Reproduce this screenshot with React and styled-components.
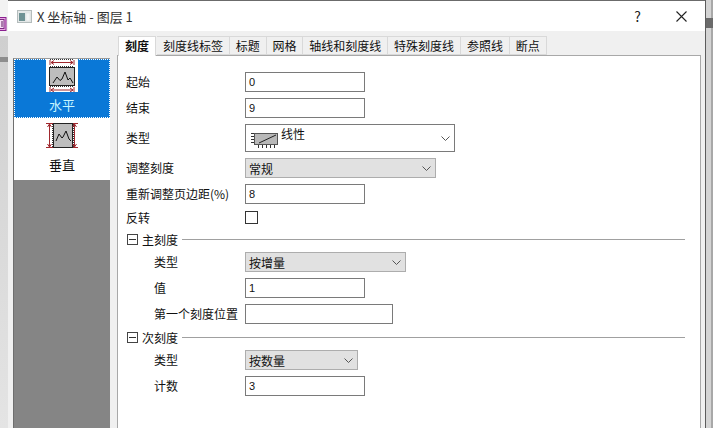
import React from "react";
import styled, { createGlobalStyle } from "styled-components";

const GlobalStyle = createGlobalStyle`
    html, body {
        margin: 0;
        padding: 0;
        background: #8a8a8a;
    }
    * {
        box-sizing: border-box;
    }
`;

const FONT = `"Noto Sans CJK SC", "Liberation Sans", sans-serif`;

const tabs = ["刻度", "刻度线标签", "标题", "网格", "轴线和刻度线", "特殊刻度线", "参照线", "断点"];

const App = () => {
    return (
        <>
            <GlobalStyle />
            <Desktop>
                <LeftEdge>
                    <AppIcon />
                    <EdgeBand />
                </LeftEdge>
                <Window>
                    <TitleBar>
                        <WindowIcon />
                        <TitleText>X 坐标轴 - 图层 1</TitleText>
                        <HelpMark>?</HelpMark>
                        <CloseIcon />
                    </TitleBar>
                    <Body>
                        <SideList>
                            <SideItem $selected>
                                <HorizontalIcon />
                                <SideLabel $selected>水平</SideLabel>
                            </SideItem>
                            <SideItem>
                                <VerticalIcon />
                                <SideLabel>垂直</SideLabel>
                            </SideItem>
                        </SideList>
                        <Main>
                            <TabStrip>
                                {tabs.map((t, i) => (
                                    <Tab key={t} $active={i === 0}>
                                        {t}
                                    </Tab>
                                ))}
                            </TabStrip>
                            <Panel>
                                <Row>
                                    <Label>起始</Label>
                                    <TextBox $w={120}>0</TextBox>
                                </Row>
                                <Row>
                                    <Label>结束</Label>
                                    <TextBox $w={120}>9</TextBox>
                                </Row>
                                <Row>
                                    <Label>类型</Label>
                                    <ComboBox>
                                        <LinearIcon />
                                        <ComboText>线性</ComboText>
                                        <Chevron />
                                    </ComboBox>
                                </Row>
                                <Row>
                                    <Label>调整刻度</Label>
                                    <SelectBox $w={191}>
                                        常规
                                        <Chevron />
                                    </SelectBox>
                                </Row>
                                <Row>
                                    <Label>重新调整页边距(%)</Label>
                                    <TextBox $w={120}>8</TextBox>
                                </Row>
                                <Row>
                                    <Label>反转</Label>
                                    <CheckBox />
                                </Row>
                                <GroupRow>
                                    <MinusBox />
                                    <GroupTitle>主刻度</GroupTitle>
                                    <GroupLine />
                                </GroupRow>
                                <Row>
                                    <Label $indent>类型</Label>
                                    <SelectBox $w={161}>
                                        按增量
                                        <Chevron />
                                    </SelectBox>
                                </Row>
                                <Row>
                                    <Label $indent>值</Label>
                                    <TextBox $w={120}>1</TextBox>
                                </Row>
                                <Row>
                                    <Label $indent>第一个刻度位置</Label>
                                    <TextBox $w={148} />
                                </Row>
                                <GroupRow>
                                    <MinusBox />
                                    <GroupTitle>次刻度</GroupTitle>
                                    <GroupLine />
                                </GroupRow>
                                <Row>
                                    <Label $indent>类型</Label>
                                    <SelectBox $w={113}>
                                        按数量
                                        <Chevron />
                                    </SelectBox>
                                </Row>
                                <Row>
                                    <Label $indent>计数</Label>
                                    <TextBox $w={120}>3</TextBox>
                                </Row>
                            </Panel>
                        </Main>
                    </Body>
                </Window>
                <RightEdge>
                    <RightNotch />
                </RightEdge>
            </Desktop>
        </>
    );
};

export default App;

const AppIcon = () => (
    <AppIconSvg width="8" height="14" viewBox="0 0 8 14">
        <rect x="-4" y="0.5" width="10" height="13" fill="#e9a8e4" stroke="#8a1f8f" />
        <rect x="-2" y="2.5" width="6" height="9" fill="#f6dff5" stroke="#7a2a80" />
        <path d="M1 5h2M1 7h2M1 9h2" stroke="#5c1a60" />
    </AppIconSvg>
);

const WindowIcon = () => (
    <svg width="15" height="13" viewBox="0 0 15 13">
        <rect x="0.5" y="0.5" width="14" height="12" fill="#e4e8e8" stroke="#b4bcbc" />
        <rect x="2" y="3" width="6" height="8" fill="#6f9294" />
        <rect x="9" y="3" width="4" height="8" fill="#f2f4f4" stroke="#d5dada" strokeWidth="0.5" />
    </svg>
);

const CloseIcon = () => (
    <CloseSvg width="11" height="11" viewBox="0 0 11 11">
        <path d="M0.5 0.5L10.5 10.5M10.5 0.5L0.5 10.5" stroke="#222" strokeWidth="1.1" fill="none" />
    </CloseSvg>
);

const HorizontalIcon = () => (
    <IconFrame width="32" height="33" viewBox="0 0 32 33">
        <rect width="32" height="33" fill="#fff" />
        <path d="M4 0.5h24" stroke="#333" strokeDasharray="1 1" />
        <path d="M5 3.5H27M5 3.5l3-2M5 3.5l3 2M27 3.5l-3-2M27 3.5l-3 2" stroke="#a0282e" fill="none" />
        <path d="M4 1v5M28 1v5" stroke="#a0282e" />
        <path d="M4 7.5h24" stroke="#333" strokeDasharray="1 1" />
        <rect x="3.5" y="8.5" width="25" height="18" fill="#bdbdbd" stroke="#222" />
        <path d="M7 24l4-6 3 3.5 2-1.5 3-7 3 8 2-2 3 5" stroke="#111" fill="none" />
        <path d="M4 27.5h24" stroke="#333" strokeDasharray="1 1" />
        <path d="M5 31H27M5 31l3-2M5 31l3 2M27 31l-3-2M27 31l-3 2" stroke="#a0282e" fill="none" />
        <path d="M4 28v5M28 28v5" stroke="#a0282e" />
    </IconFrame>
);

const VerticalIcon = () => (
    <IconFrame width="32" height="27" viewBox="0 0 32 27">
        <path d="M3.5 2V25M3.5 2l-2 3M3.5 2l2 3M3.5 25l-2-3M3.5 25l2-3" stroke="#a0282e" fill="none" />
        <path d="M0 1.5h7M0 25.5h7M25 1.5h7M25 25.5h7" stroke="#a0282e" />
        <path d="M6.5 2v23M27.5 2v23" stroke="#333" strokeDasharray="1 1" />
        <rect x="7.5" y="1.5" width="19" height="24" fill="#bdbdbd" stroke="#222" />
        <path d="M10 19l3-7 3 4 1-1 3-6 3 8 2 2" stroke="#111" fill="none" />
        <path d="M28.5 2V25M28.5 2l-2 3M28.5 2l2 3M28.5 25l-2-3M28.5 25l2-3" stroke="#a0282e" fill="none" />
    </IconFrame>
);

const LinearIcon = () => (
    <svg width="27" height="17" viewBox="0 0 27 17">
        <path d="M0 2.5h6M0 5.5h6M0 8.5h6M0 11.5h6" stroke="#333" />
        <path d="M7.5 14v3M11.5 14v3M15.5 14v3M19.5 14v3M23.5 14v3" stroke="#333" />
        <rect x="3.5" y="2.5" width="23" height="11" fill="#b9b9b9" stroke="#555" />
        <path d="M8 12L25 4" stroke="#222" fill="none" />
    </svg>
);

const Chevron = () => (
    <ChevronSvg width="9" height="5" viewBox="0 0 9 5">
        <path d="M0.5 0.5L4.5 4.5L8.5 0.5" stroke="#555" fill="none" />
    </ChevronSvg>
);

const MinusBox = () => (
    <svg width="11" height="11" viewBox="0 0 11 11">
        <rect x="0.5" y="0.5" width="10" height="10" fill="#fff" stroke="#444" />
        <path d="M2 5.5h7" stroke="#333" />
    </svg>
);

const Desktop = styled.div`
    display: flex;
    width: 713px;
    height: 428px;
    overflow: hidden;
    font-family: ${FONT};
    font-size: 12px;
    color: #111;
    background: #a8a8a8;
`;

const LeftEdge = styled.div`
    width: 8px;
    flex-shrink: 0;
    display: flex;
    flex-direction: column;
    padding-top: 17px;
    background: linear-gradient(to bottom, #f2f2f2 0, #f2f2f2 36px, #cfcfcf 36px, #e4e4e4 100%);
`;

const AppIconSvg = styled.svg`
    display: block;
    flex-shrink: 0;
`;

const EdgeBand = styled.div`
    height: 5px;
    margin-top: 26px;
    background: #8d8d8d;
`;

const RightEdge = styled.div`
    width: 8px;
    flex-shrink: 0;
    padding-top: 18px;
    background: linear-gradient(to right, #d4d4d4 0, #d4d4d4 5px, #a8a8a8 5px);
    border-left: 1px solid #5c5c5c;
`;

const RightNotch = styled.div`
    width: 7px;
    height: 10px;
    background: #6a6a6a;
`;

const Window = styled.div`
    width: 697px;
    flex-shrink: 0;
    display: flex;
    flex-direction: column;
    background: #f0f0f0;
`;

const TitleBar = styled.div`
    height: 31px;
    flex-shrink: 0;
    display: flex;
    align-items: center;
    padding: 0 18px 0 9px;
    background: #fff;
    border-top: 1px solid #6b6b6b;
`;

const TitleText = styled.div`
    margin-left: 5px;
    flex: 1;
    font-size: 13px;
    color: #333;
`;

const HelpMark = styled.div`
    margin-right: 35px;
    font-size: 14px;
    color: #222;
`;

const CloseSvg = styled.svg`
    display: block;
`;

const Body = styled.div`
    flex: 1;
    min-height: 0;
    display: flex;
    padding: 0 4px 0 5px;
`;

const SideList = styled.div`
    width: 97px;
    flex-shrink: 0;
    margin-top: 27px;
    margin-right: 7px;
    background: #858585;
    border-left: 1px solid #6e6e6e;
    border-top: 1px solid #9a9a9a;
`;

const SideItem = styled.div`
    height: ${(p) => (p.$selected ? "59px" : "62px")};
    display: flex;
    flex-direction: column;
    align-items: center;
    gap: ${(p) => (p.$selected ? "4px" : "7px")};
    padding-top: ${(p) => (p.$selected ? "0" : "4px")};
    background: ${(p) => (p.$selected ? "#0a78d7" : "#fff")};
    outline: ${(p) => (p.$selected ? "1px dotted #fff" : "none")};
    outline-offset: -1px;
`;

const IconFrame = styled.svg`
    display: block;
    flex-shrink: 0;
`;

const SideLabel = styled.div`
    font-size: 13px;
    line-height: 18px;
    color: ${(p) => (p.$selected ? "#c8f6ff" : "#111")};
`;

const Main = styled.div`
    flex: 1;
    min-width: 0;
    display: flex;
    flex-direction: column;
    padding-top: 5px;
`;

const TabStrip = styled.div`
    height: 19px;
    flex-shrink: 0;
    display: flex;
    padding-left: 1px;
`;

const Tab = styled.div`
    height: ${(p) => (p.$active ? "20px" : "19px")};
    padding: 0 ${(p) => (p.$active ? "6px" : "5.9px")};
    margin-right: ${(p) => (p.$active ? "1px" : "0")};
    line-height: 18px;
    font-weight: ${(p) => (p.$active ? 700 : 400)};
    background: ${(p) => (p.$active ? "#fff" : "#f0f0f0")};
    border: 1px solid #d9d9d9;
    border-bottom: ${(p) => (p.$active ? "none" : "1px solid #d9d9d9")};
    border-left: ${(p) => (p.$active ? "1px solid #d9d9d9" : "none")};
    position: relative;
    z-index: ${(p) => (p.$active ? 1 : 0)};
`;

const Panel = styled.div`
    flex: 1;
    min-height: 0;
    display: flex;
    flex-direction: column;
    gap: 6px;
    padding: 16px 15px 0 8px;
    background: #fff;
    border: 1px solid #a8a8a8;
    border-bottom: none;
`;

const Row = styled.div`
    display: flex;
    align-items: center;
    flex-shrink: 0;
`;

const Label = styled.div`
    width: 119px;
    padding-left: ${(p) => (p.$indent ? "28px" : "0")};
    font-size: 12px;
    line-height: 16px;
    white-space: nowrap;
    flex-shrink: 0;
`;

const TextBox = styled.div`
    width: ${(p) => p.$w}px;
    height: 20px;
    padding-left: 3px;
    line-height: 19px;
    font-family: "Liberation Sans", sans-serif;
    font-size: 11px;
    background: #fff;
    border: 1px solid #7a7a7a;
`;

const ComboBox = styled.div`
    width: 210px;
    height: 28px;
    display: flex;
    align-items: flex-start;
    padding: 6px 4px 6px 5px;
    background: #fff;
    border: 1px solid #7a7a7a;
`;

const ComboText = styled.div`
    flex: 1;
    margin-left: 3px;
    margin-top: -6px;
    line-height: 18px;
`;

const SelectBox = styled.div`
    width: ${(p) => p.$w}px;
    height: 20px;
    display: flex;
    align-items: center;
    justify-content: space-between;
    padding: 0 4px 0 3px;
    background: #e1e1e1;
    border: 1px solid #adadad;
`;

const ChevronSvg = styled.svg`
    display: block;
    flex-shrink: 0;
    align-self: center;
`;

const CheckBox = styled.div`
    width: 13px;
    height: 13px;
    margin: 1px 0 2px;
    background: #fff;
    border: 1px solid #333;
`;

const GroupRow = styled.div`
    height: 14px;
    display: flex;
    align-items: center;
    flex-shrink: 0;
    padding-left: 1px;
`;

const GroupTitle = styled.div`
    margin-left: 4px;
    margin-right: 4px;
    white-space: nowrap;
`;

const GroupLine = styled.div`
    flex: 1;
    height: 1px;
    background: #a0a0a0;
`;
